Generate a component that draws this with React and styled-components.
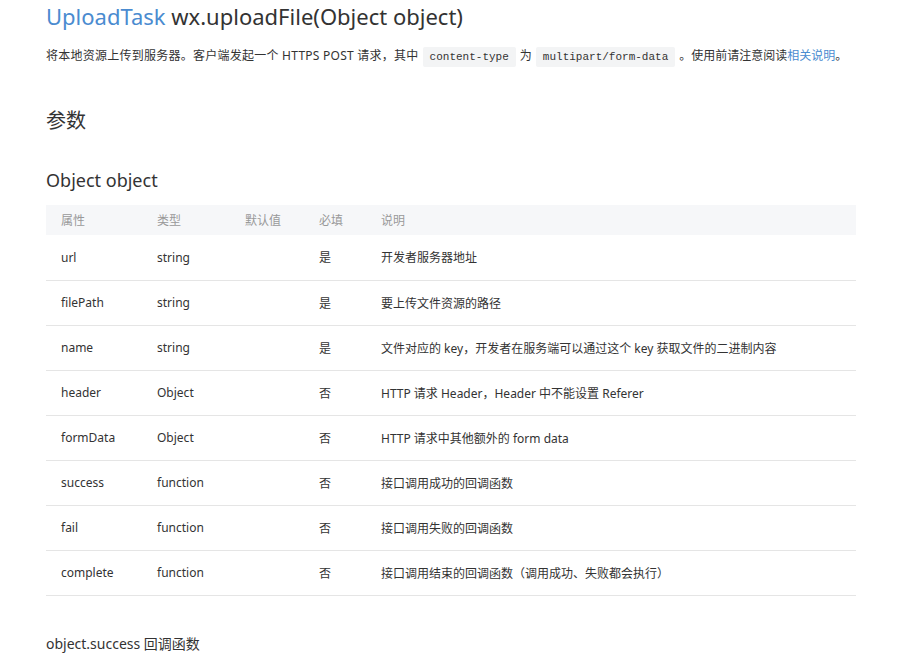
import React from 'react'
import styled, { createGlobalStyle } from 'styled-components'

const GlobalStyle = createGlobalStyle`
  * {
    box-sizing: border-box;
  }
  body {
    margin: 0;
    background: #fff;
    color: #333;
    font-family: "Noto Sans", "Noto Sans CJK SC", sans-serif;
  }
`

const Page = styled.div`
  padding: 0 40px 0 46px;
`

const Title = styled.h1`
  margin: 0;
  font-size: 22px;
  line-height: 32px;
  font-weight: 400;
  color: #333;
`

const Link = styled.a`
  color: #4a8bd0;
  text-decoration: none;
`

const Para = styled.p`
  margin: 12px 0 0;
  font-size: 12px;
  line-height: 24px;
  color: #333;
  white-space: nowrap;
`

const Lead = styled.span`
  letter-spacing: 0.25px;
`

const Code = styled.code`
  font-family: "Liberation Mono", "DejaVu Sans Mono", monospace;
  font-size: 11px;
  background: #f3f4f5;
  padding: 4px 7px;
  margin: 0 4px;
  border-radius: 2px;
`

const H2 = styled.h2`
  margin: 38px 0 0;
  font-size: 20px;
  line-height: 28px;
  font-weight: 400;
`

const H3 = styled.h3`
  margin: 32px 0 0;
  font-size: 18px;
  line-height: 26px;
  font-weight: 400;
`

const Table = styled.table`
  margin-top: 12px;
  width: 810px;
  border-collapse: collapse;
  font-size: 12px;
`

const Th = styled.th`
  background: #f6f7f9;
  height: 30px;
  padding: 0 0 0 15px;
  text-align: left;
  font-weight: 400;
  font-size: 12px;
  color: #999;
  width: ${p => p.w || 'auto'};
`

const Td = styled.td`
  height: 45px;
  padding: 0 0 0 15px;
  border-bottom: 1px solid #e5e5e5;
  color: #333;
`

const H4 = styled.h4`
  margin: 38px 0 0;
  font-size: 14px;
  line-height: 20px;
  font-weight: 400;
`

const rows = [
  ['url', 'string', '', '是', '开发者服务器地址'],
  ['filePath', 'string', '', '是', '要上传文件资源的路径'],
  ['name', 'string', '', '是', '文件对应的 key，开发者在服务端可以通过这个 key 获取文件的二进制内容'],
  ['header', 'Object', '', '否', 'HTTP 请求 Header，Header 中不能设置 Referer'],
  ['formData', 'Object', '', '否', 'HTTP 请求中其他额外的 form data'],
  ['success', 'function', '', '否', '接口调用成功的回调函数'],
  ['fail', 'function', '', '否', '接口调用失败的回调函数'],
  ['complete', 'function', '', '否', '接口调用结束的回调函数（调用成功、失败都会执行）'],
]

export default function App() {
  return (
    <Page>
      <GlobalStyle />
      <Title>
        <Link href="#">UploadTask</Link> wx.uploadFile(Object object)
      </Title>
      <Para>
        <Lead>将本地资源上传到服务器。客户端发起一个 HTTPS POST 请求，其中</Lead><Code>content-type</Code>为<Code>multipart/form-data</Code>。使用前请注意阅读<Link href="#">相关说明</Link>。
      </Para>
      <H2>参数</H2>
      <H3>Object object</H3>
      <Table>
        <thead>
          <tr>
            <Th w="96px">属性</Th>
            <Th w="88px">类型</Th>
            <Th w="74px">默认值</Th>
            <Th w="62px">必填</Th>
            <Th>说明</Th>
          </tr>
        </thead>
        <tbody>
          {rows.map(r => (
            <tr key={r[0]}>
              {r.map((c, i) => (
                <Td key={i}>{c}</Td>
              ))}
            </tr>
          ))}
        </tbody>
      </Table>
      <H4>object.success 回调函数</H4>
    </Page>
  )
}
